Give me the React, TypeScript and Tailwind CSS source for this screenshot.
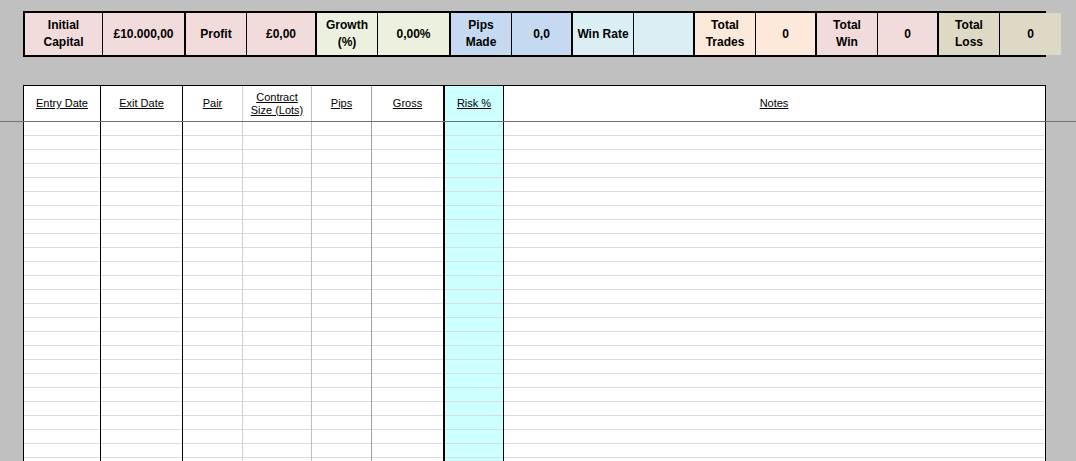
const stats = [
  { label: 'Initial Capital', value: '£10.000,00', bg: 'bg-[#f2dcdb]', lw: 'w-[77px]', vw: 'w-[82px]' },
  { label: 'Profit', value: '£0,00', bg: 'bg-[#f2dcdb]', lw: 'w-[60px]', vw: 'w-[69px]' },
  { label: 'Growth (%)', value: '0,00%', bg: 'bg-[#ebf1de]', lw: 'w-[60px]', vw: 'w-[72px]' },
  { label: 'Pips Made', value: '0,0', bg: 'bg-[#c5d9f1]', lw: 'w-[60px]', vw: 'w-[60px]' },
  { label: 'Win Rate', value: '', bg: 'bg-[#daeef3]', lw: 'w-[60px]', vw: 'w-[60px]' },
  { label: 'Total Trades', value: '0', bg: 'bg-[#fde9d9]', lw: 'w-[60px]', vw: 'w-[60px]' },
  { label: 'Total Win', value: '0', bg: 'bg-[#f2dcdb]', lw: 'w-[60px]', vw: 'w-[60px]' },
  { label: 'Total Loss', value: '0', bg: 'bg-[#ddd9c4]', lw: 'w-[60px]', vw: 'w-[62px]' },
];

const cols = [
  { name: 'Entry Date', w: 'w-[77px]', line: 'border-black' },
  { name: 'Exit Date', w: 'w-[82px]', line: 'border-black' },
  { name: 'Pair', w: 'w-[60px]', line: 'border-[#d0d0d0]' },
  { name: 'Contract Size (Lots)', w: 'w-[69px]', line: 'border-[#c0c0c0]' },
  { name: 'Pips', w: 'w-[60px]', line: 'border-[#a0a0a0]' },
  { name: 'Gross', w: 'w-[72px]', line: 'border-black' },
  { name: 'Risk %', w: 'w-[60px]', line: 'border-black', bg: 'bg-[#ccffff]' },
  { name: 'Notes', w: 'flex-1', line: 'border-transparent' },
];

const rows = Array.from({ length: 24 });

export default function App() {
  return (
    <div className="h-[461px] w-[1076px] overflow-hidden bg-[#c0c0c0] relative" style={{ fontFamily: '"Liberation Sans", Arial, sans-serif' }}>
      <div className="pl-[23px] pt-[11px]">
        {/* summary bar */}
        <div className="flex w-[1023px] h-[46px] border-2 border-black">
          {stats.map((s, i) => (
            <div key={i} className={`flex ${s.bg} ${i > 0 ? 'border-l-2 border-black' : ''}`}>
              <div className={`${s.lw} flex items-center justify-center text-center text-[12px] font-bold leading-[17px] px-1`}>{s.label}</div>
              <div className={`${s.vw} flex items-center justify-center border-l border-black text-[12px] font-bold`}>{s.value}</div>
            </div>
          ))}
        </div>

        {/* trade log */}
        <div className="mt-[28px] w-[1023px] flex bg-white border border-black border-b-0 h-[380px]">
          {cols.map((c, i) => (
            <div key={i} className={`${c.w} ${c.bg ?? ''} flex flex-col border-r ${c.line} ${i === 6 ? 'border-l border-l-black' : ''}`}>
              <div className="h-[36px] flex items-center justify-center text-center text-[11px] leading-[13px] underline px-1 border-b border-[#999]">
                {c.name}
              </div>
              {rows.map((_, r) => (
                <div key={r} className="h-[14px] border-b border-[#dcdcdc]" />
              ))}
            </div>
          ))}
        </div>
      </div>
      {/* freeze pane line */}
      <div className="absolute left-0 right-0 top-[121px] h-px bg-[#707070]" />
    </div>
  );
}
